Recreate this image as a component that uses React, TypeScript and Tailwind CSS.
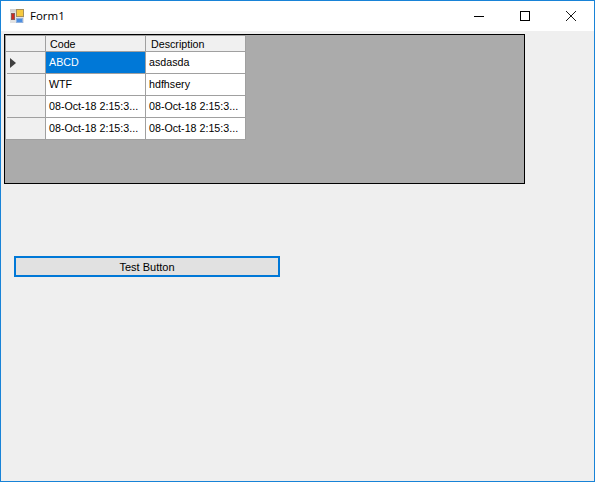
const rows = [
  { code: 'ABCD', description: 'asdasda', current: true },
  { code: 'WTF', description: 'hdfhsery' },
  { code: '08-Oct-18 2:15:3...', description: '08-Oct-18 2:15:3...' },
  { code: '08-Oct-18 2:15:3...', description: '08-Oct-18 2:15:3...', last: true },
];

function FormIcon() {
  return (
    <svg width="14" height="14" viewBox="0 0 14 14" className="shrink-0">
      <rect x="0" y="0" width="6" height="3" fill="#d4d4d4" />
      <rect x="0" y="3" width="14" height="11" fill="#e2e2e2" />
      <rect x="6.5" y="0.5" width="7" height="7" fill="#f6c93f" stroke="#a8905a" />
      <rect x="1.5" y="4.5" width="3" height="6" fill="#cf2a22" stroke="#8b5a55" />
      <rect x="6.5" y="9.5" width="6" height="4" fill="#4d8fe0" stroke="#8fb0de" />
    </svg>
  );
}

function TitleBar() {
  return (
    <div className="flex h-[30px] items-center bg-white pl-[9px]">
      <FormIcon />
      <span className="ml-[6px] font-['Open_Sans',sans-serif] text-[11.5px] text-black">Form1</span>
      <div className="ml-auto flex h-full">
        <button className="flex w-[46px] items-center justify-center">
          <svg width="10" height="10" viewBox="0 0 10 10"><path d="M0 5.5h10" stroke="#000" fill="none" /></svg>
        </button>
        <button className="flex w-[46px] items-center justify-center">
          <svg width="10" height="10" viewBox="0 0 10 10"><rect x="0.5" y="0.5" width="9" height="9" stroke="#000" fill="none" /></svg>
        </button>
        <button className="flex w-[46px] items-center justify-center">
          <svg width="10" height="10" viewBox="0 0 10 10"><path d="M0 0l10 10M10 0L0 10" stroke="#000" fill="none" strokeWidth="0.9" /></svg>
        </button>
      </div>
    </div>
  );
}

function DataGrid() {
  return (
    <div className="h-[150px] w-[521px] border border-black bg-[#ababab]">
      <div className="grid w-fit grid-cols-[41px_100px_100px] grid-rows-[17px_22px_22px_22px_22px] text-[10.7px]">
        <div className="border-t border-r border-b border-l border-[#a0a0a0] bg-[#f0f0f0]" />
        <div className="border-t border-r border-b border-[#a0a0a0] bg-[#f0f0f0] pl-[4px] leading-[16px]">Code</div>
        <div className="border-t border-r border-b border-[#a0a0a0] bg-[#f0f0f0] pl-[5px] leading-[16px]">Description</div>
        {rows.map((row, i) => (
          <div key={i} className="contents">
            <div className={`border-r border-l border-[#a0a0a0] bg-[#f0f0f0] pl-px ${row.last ? 'border-b' : ''}`}>
              <div className={`flex h-full items-center pl-[3px] ${row.last ? '' : 'border-b border-[#a0a0a0]'}`}>
                {row.current ? (
                  <svg width="6" height="10" viewBox="0 0 6 10"><path d="M0 0l6 5-6 5z" fill="#404040" /></svg>
                ) : null}
              </div>
            </div>
            <div className={`overflow-hidden border-r border-b border-[#a0a0a0] pl-[3px] leading-[21px] whitespace-nowrap ${row.current ? 'bg-[#0078d7] text-white' : 'bg-white'}`}>
              {row.code}
            </div>
            <div className="overflow-hidden border-r border-b border-[#a0a0a0] bg-white pl-[3px] leading-[21px] whitespace-nowrap">{row.description}</div>
          </div>
        ))}
      </div>
    </div>
  );
}

export default function App() {
  return (
    <div className="flex h-[482px] w-[595px] flex-col overflow-hidden border border-[#1883d7] bg-[#efefef] font-['Liberation_Sans',sans-serif] text-[11px] text-black">
      <TitleBar />
      <div className="flex flex-col items-start pt-[3px] pl-[3px]">
        <DataGrid />
        <button className="mt-[72px] ml-[10px] flex h-[21px] w-[266px] justify-center border-2 border-[#0078d7] bg-[#e1e1e1] pt-px leading-[17px]">
          Test Button
        </button>
      </div>
    </div>
  );
}
